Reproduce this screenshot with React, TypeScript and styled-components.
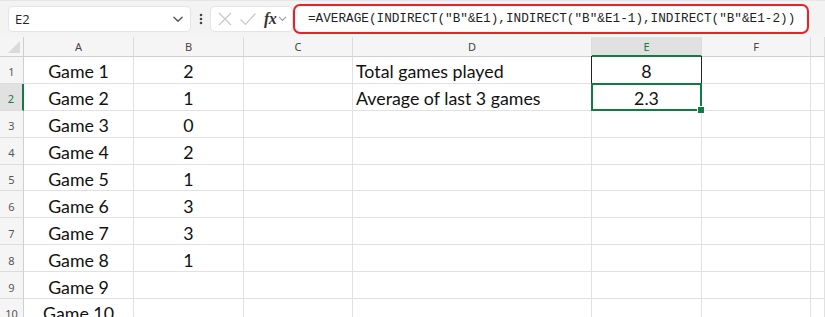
import React from "react";
import styled, { createGlobalStyle, css } from "styled-components";

const Global = createGlobalStyle`
  html, body { margin: 0; padding: 0; background: #f5f5f5; }
  #root { width: 825px; height: 317px; overflow: hidden; }
`;

const Page = styled.div`
  width: 825px;
  height: 317px;
  overflow: hidden;
  background: #f5f5f5;
  display: flex;
  flex-direction: column;
  font-family: "Liberation Sans", Arial, sans-serif;
`;

const Toolbar = styled.div`
  height: 36px;
  flex: 0 0 36px;
  display: flex;
  align-items: center;
  padding-left: 9px;
  box-sizing: border-box;
  background: #f3f3f3;
  border-top: 1px solid #e6e6e6;
`;

const NameBox = styled.div`
  width: 181px;
  height: 24px;
  box-sizing: border-box;
  background: #fff;
  border-radius: 4px;
  box-shadow: 0 0 0 1px #e4e4e4;
  display: flex;
  align-items: center;
  justify-content: space-between;
  padding: 0 5px 0 6px;
  font-family: "Open Sans", "Noto Sans", sans-serif;
  font-size: 13px;
  color: #242424;
`;

const Dots = styled.div`
  width: 21px;
  display: flex;
  justify-content: center;
`;

const FnBox = styled.div`
  width: 81px;
  height: 24px;
  box-sizing: border-box;
  background: #fff;
  border-radius: 4px;
  box-shadow: 0 0 0 1px #e4e4e4;
  display: flex;
  align-items: center;
  padding-left: 6px;
`;

const Fx = styled.span`
  font-family: "Liberation Serif", "Times New Roman", serif;
  font-style: italic;
  font-weight: bold;
  font-size: 16px;
  color: #333;
  margin-left: 7px;
  margin-right: 1px;
  letter-spacing: -0.5px;
`;

const FormulaOutline = styled.div`
  margin-left: 1px;
  width: 516px;
  height: 30px;
  box-sizing: border-box;
  border: 2px solid #e3242b;
  border-radius: 7px;
  padding: 1px;
  display: flex;
`;

const FormulaInput = styled.div`
  flex: 1;
  background: #fff;
  border-radius: 4px;
  display: flex;
  align-items: center;
  padding-left: 12px;
  font-family: "Liberation Mono", "DejaVu Sans Mono", monospace;
  font-size: 12.7px;
  color: #1f1f1f;
  white-space: nowrap;
  overflow: hidden;
`;

const Gap = styled.div`
  height: 1px;
  flex: 0 0 1px;
  background: #f5f5f5;
`;

const cols = [110, 110, 109, 239, 110, 109];

const Grid = styled.div`
  display: grid;
  grid-template-columns: 24px ${cols.map((c) => c + "px").join(" ")} 1fr;
  grid-template-rows: 20px repeat(10, 26.9px);
  background: #fff;
  flex: 1;
`;

const Corner = styled.div`
  background: #f5f5f5;
  border-right: 1px solid #cfcfcf;
  border-bottom: 1px solid #cfcfcf;
  box-sizing: border-box;
  display: flex;
  align-items: flex-end;
  justify-content: flex-end;
  padding: 0 3px 3px 0;
`;

const ColHead = styled.div<{ $active?: boolean }>`
  background: ${(p) => (p.$active ? "#e1e1e1" : "#f5f5f5")};
  border-right: 1px solid #dcdcdc;
  border-bottom: ${(p) => (p.$active ? "2px solid #107c41" : "1px solid #cfcfcf")};
  box-sizing: border-box;
  display: flex;
  align-items: center;
  justify-content: center;
  font-family: "Noto Sans", "Open Sans", sans-serif;
  font-size: 11px;
  color: ${(p) => (p.$active ? "#107c41" : "#444")};
  padding-top: ${(p) => (p.$active ? "1px" : "0")};
`;

const RowHead = styled.div<{ $active?: boolean }>`
  background: ${(p) => (p.$active ? "#e1e1e1" : "#f5f5f5")};
  border-right: ${(p) => (p.$active ? "2px solid #107c41" : "1px solid #cfcfcf")};
  border-bottom: 1px solid #dcdcdc;
  box-sizing: border-box;
  display: flex;
  align-items: center;
  justify-content: center;
  padding-top: 4px;
  font-family: "Noto Sans", "Open Sans", sans-serif;
  font-size: 11px;
  color: ${(p) => (p.$active ? "#107c41" : "#555")};
`;

const Cell = styled.div<{ $align?: "left" | "center"; $boxed?: boolean; $selected?: boolean }>`
  position: relative;
  border-right: 1px solid #e1e1e1;
  border-bottom: 1px solid #e1e1e1;
  box-sizing: border-box;
  display: flex;
  align-items: center;
  justify-content: ${(p) => (p.$align === "left" ? "flex-start" : "center")};
  padding: 3px 3px 0 3px;
  font-family: "Lato", "Noto Sans", sans-serif;
  font-size: 17.8px;
  color: #111;
  white-space: nowrap;
  ${(p) =>
    p.$boxed &&
    css`
      &::before {
        content: "";
        position: absolute;
        left: -1px;
        top: -1px;
        right: -1px;
        bottom: -1px;
        border-left: 1px solid #222;
        border-right: 1px solid #222;
        pointer-events: none;
      }
    `}
  ${(p) =>
    p.$selected &&
    css`
      &::after {
        content: "";
        position: absolute;
        left: -1px;
        top: -1px;
        right: -1px;
        bottom: -1px;
        border: 2px solid #107c41;
        pointer-events: none;
      }
    `}
`;

const Handle = styled.span`
  position: absolute;
  right: -4px;
  bottom: -4px;
  width: 6px;
  height: 6px;
  background: #107c41;
  border: 1px solid #fff;
  z-index: 2;
`;

const ChevronDown = ({ size = 12, color = "#444" }: { size?: number; color?: string }) => (
  <svg width={size} height={size} viewBox="0 0 12 12">
    <path d="M2.5 4.5 L6 8 L9.5 4.5" fill="none" stroke={color} strokeWidth="1.2" strokeLinecap="round" strokeLinejoin="round" />
  </svg>
);

const data: [string, string][] = [
  ["Game 1", "2"],
  ["Game 2", "1"],
  ["Game 3", "0"],
  ["Game 4", "2"],
  ["Game 5", "1"],
  ["Game 6", "3"],
  ["Game 7", "3"],
  ["Game 8", "1"],
  ["Game 9", ""],
  ["Game 10", ""],
];

const letters = ["A", "B", "C", "D", "E", "F", ""];

export default function App() {
  return (
    <Page>
      <Global />
      <Toolbar>
        <NameBox>
          <span>E2</span>
          <ChevronDown size={14} color="#555" />
        </NameBox>
        <Dots>
          <svg width="4" height="12" viewBox="0 0 4 12">
            <circle cx="2" cy="2" r="1.3" fill="#444" />
            <circle cx="2" cy="6" r="1.3" fill="#444" />
            <circle cx="2" cy="10" r="1.3" fill="#444" />
          </svg>
        </Dots>
        <FnBox>
          <svg width="16" height="16" viewBox="0 0 16 16">
            <path d="M2 2 L14 14 M14 2 L2 14" stroke="#c8c8c8" strokeWidth="1.2" fill="none" />
          </svg>
          <svg width="18" height="16" viewBox="0 0 18 16" style={{ marginLeft: 6 }}>
            <path d="M1.5 8.5 L6.5 13.5 L16.5 2.5" stroke="#c8c8c8" strokeWidth="1.2" fill="none" />
          </svg>
          <Fx>fx</Fx>
          <ChevronDown size={11} color="#999" />
        </FnBox>
        <FormulaOutline>
          <FormulaInput>=AVERAGE(INDIRECT("B"&amp;E1),INDIRECT("B"&amp;E1-1),INDIRECT("B"&amp;E1-2))</FormulaInput>
        </FormulaOutline>
      </Toolbar>
      <Gap />
      <Grid>
        <Corner>
          <svg width="12" height="12" viewBox="0 0 12 12">
            <path d="M12 0 L12 12 L0 12 Z" fill="#dadada" />
          </svg>
        </Corner>
        {letters.map((l, i) => (
          <ColHead key={i} $active={l === "E"}>
            {l}
          </ColHead>
        ))}
        {data.map(([a, b], r) => (
          <React.Fragment key={r}>
            <RowHead $active={r === 1}>{r + 1}</RowHead>
            <Cell>{a}</Cell>
            <Cell>{b}</Cell>
            <Cell />
            <Cell $align="left">
              {r === 0 ? "Total games played" : r === 1 ? "Average of last 3 games" : ""}
            </Cell>
            <Cell $boxed={r === 0} $selected={r === 1}>
              {r === 0 ? "8" : r === 1 ? "2.3" : ""}
              {r === 1 && <Handle />}
            </Cell>
            <Cell />
            <Cell />
          </React.Fragment>
        ))}
      </Grid>
    </Page>
  );
}
